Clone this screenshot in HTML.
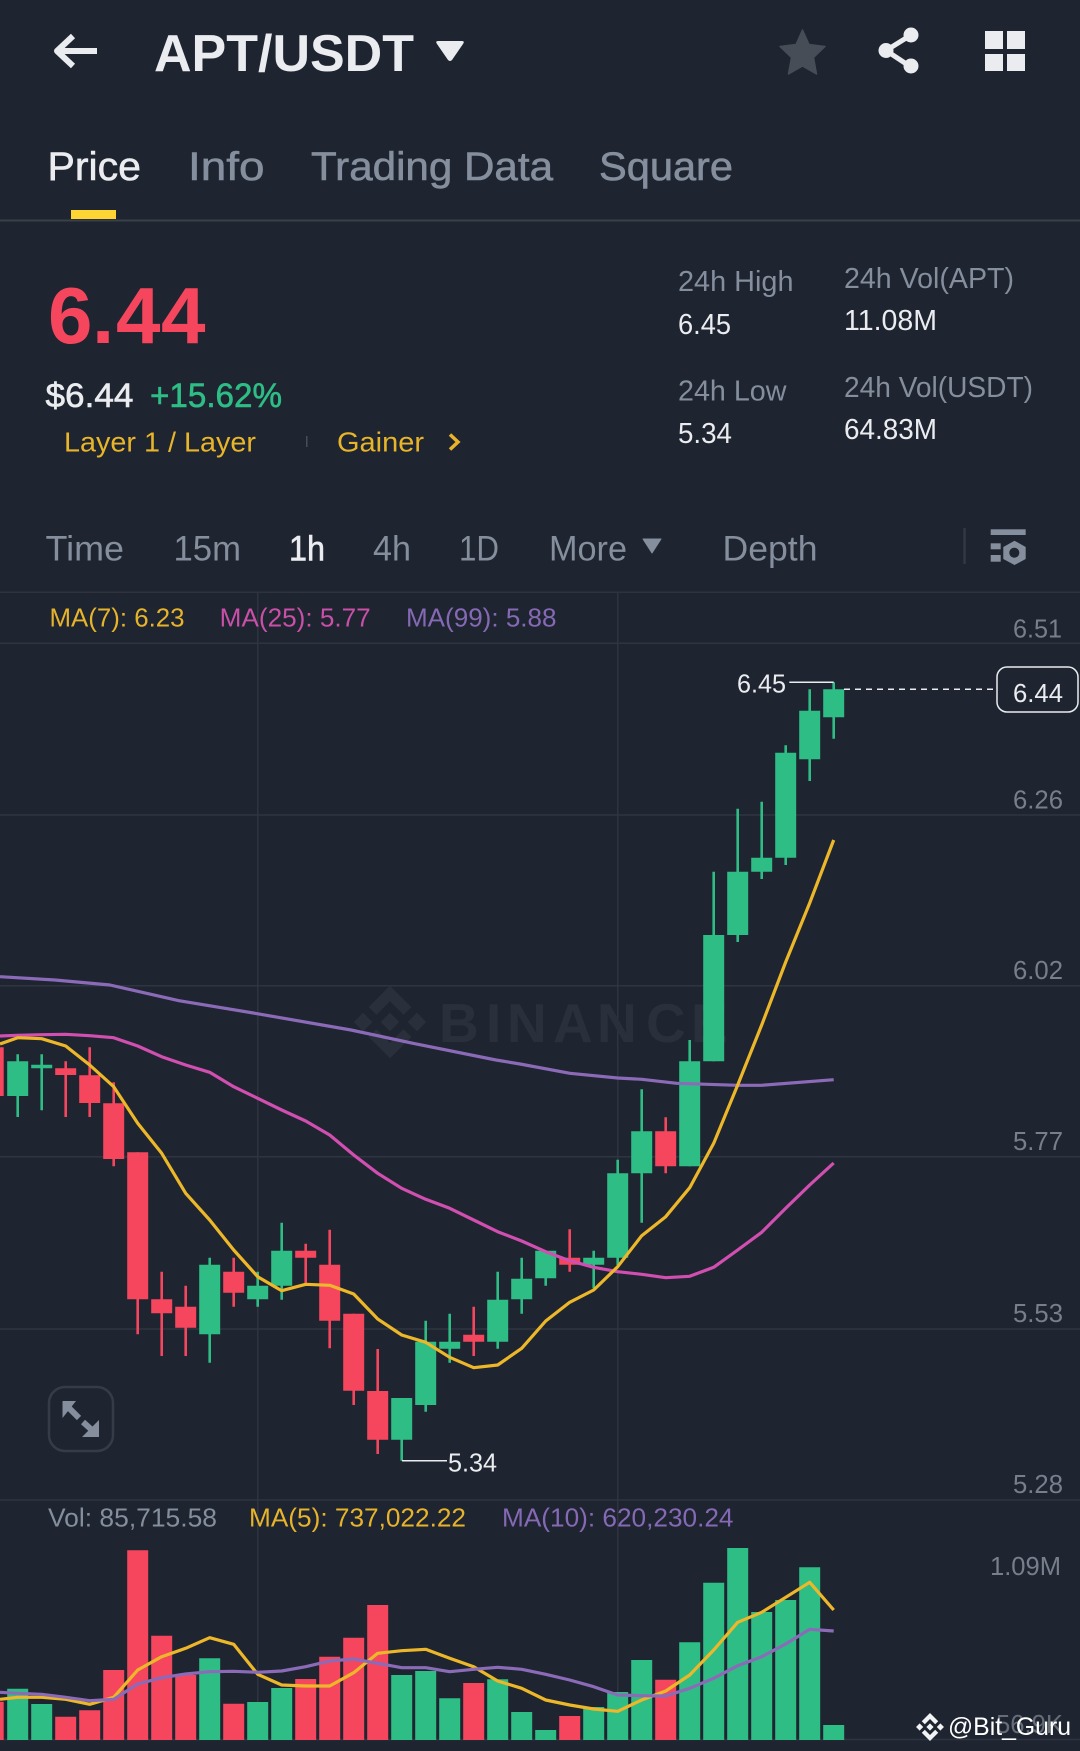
<!DOCTYPE html>
<html><head><meta charset="utf-8"><title>APT/USDT</title>
<style>
html,body{margin:0;padding:0;background:#1E2430;width:1080px;height:1751px;overflow:hidden}
svg{display:block}
text{font-family:"Liberation Sans",sans-serif}
.g{fill:#848E9C}.w{fill:#EAECEF}.a{fill:#777F8C;font-size:26px}
.m{stroke-width:.6px;stroke:currentColor}
</style></head><body>
<svg width="1080" height="1751" viewBox="0 0 1080 1751" xmlns="http://www.w3.org/2000/svg">
<rect width="1080" height="1751" fill="#1E2430"/>

<!-- header icons -->
<path d="M97 51H59M73 36L57 51L73 66" fill="none" stroke="#EAECEF" stroke-width="6" stroke-linejoin="round"/>
<text x="154" y="71" font-size="52" font-weight="700" class="w" textLength="260" lengthAdjust="spacingAndGlyphs">APT/USDT</text>
<path d="M438 41H462Q465 41 463 44L452 60Q450 62 448 60L437 44Q435 41 438 41Z" fill="#EAECEF"/>
<path d="M802.5 30L809 44.500L825 46.500L813.500 57.500L816.500 74L802.500 66L788.500 74L791.500 57.500L780 46.500L796 44.500Z" fill="#474D57" stroke="#474D57" stroke-width="1.500" stroke-linejoin="round"/>
<g fill="#EAECEF" stroke="#EAECEF"><path d="M911 35L886 50.500L911 67" fill="none" stroke-width="5"/><circle cx="911" cy="35" r="7"/><circle cx="886" cy="50.500" r="7"/><circle cx="911" cy="66" r="7"/></g>
<path d="M985 31h18v18h-18zM1007 31h18v18h-18zM985 54h18v17h-18zM1007 54h18v17h-18z" fill="#EAECEF"/>

<!-- tabs -->
<g font-size="40">
<text x="47.500" y="180" class="w m" color="#EAECEF" textLength="93.500" lengthAdjust="spacingAndGlyphs">Price</text>
<text x="188" y="180" class="g m" color="#848E9C" textLength="76.500" lengthAdjust="spacingAndGlyphs">Info</text>
<text x="311" y="180" class="g m" color="#848E9C" textLength="242" lengthAdjust="spacingAndGlyphs">Trading Data</text>
<text x="599" y="180" class="g m" color="#848E9C" textLength="134" lengthAdjust="spacingAndGlyphs">Square</text>
</g>
<rect x="71" y="210" width="45" height="9" fill="#FCD535"/>
<rect x="0" y="219.500" width="1080" height="2" fill="#3A3F48"/>

<!-- price -->
<text x="48 92 116 161" y="343" font-size="80" font-weight="700" fill="#F6465D">6.44</text>
<text x="45.500" y="407" font-size="34" class="w m" color="#EAECEF" textLength="88" lengthAdjust="spacingAndGlyphs">$6.44</text>
<text x="150" y="407" font-size="34" fill="#2EBD85" class="m" color="#2EBD85" textLength="132" lengthAdjust="spacingAndGlyphs">+15.62%</text>
<text x="64" y="451.500" font-size="28" fill="#E8B52A" textLength="192" lengthAdjust="spacingAndGlyphs">Layer 1 / Layer</text>
<rect x="306" y="436" width="1.500" height="11" fill="#474D57"/>
<text x="337" y="451.500" font-size="28" fill="#E8B52A" textLength="87" lengthAdjust="spacingAndGlyphs">Gainer</text>
<path d="M450 434.500L458 442L450 449.500" fill="none" stroke="#E8B52A" stroke-width="3.500"/>

<!-- stats -->
<g font-size="29">
<text x="678" y="291" class="g" textLength="115.500" lengthAdjust="spacingAndGlyphs">24h High</text>
<text x="678" y="334" class="w" textLength="53" lengthAdjust="spacingAndGlyphs">6.45</text>
<text x="844" y="288" class="g" textLength="170" lengthAdjust="spacingAndGlyphs">24h Vol(APT)</text>
<text x="844" y="330" class="w" textLength="93" lengthAdjust="spacingAndGlyphs">11.08M</text>
<text x="678" y="400.500" class="g" textLength="108.500" lengthAdjust="spacingAndGlyphs">24h Low</text>
<text x="678" y="443" class="w" textLength="54" lengthAdjust="spacingAndGlyphs">5.34</text>
<text x="844" y="397" class="g" textLength="189" lengthAdjust="spacingAndGlyphs">24h Vol(USDT)</text>
<text x="844" y="439" class="w" textLength="93" lengthAdjust="spacingAndGlyphs">64.83M</text>
</g>

<!-- timeframe row -->
<g font-size="35">
<text x="45.500" y="560.500" class="g" textLength="78.500" lengthAdjust="spacingAndGlyphs">Time</text>
<text x="173.500" y="560.500" class="g" textLength="67.500" lengthAdjust="spacingAndGlyphs">15m</text>
<text x="289" y="560.500" class="w m" color="#EAECEF" textLength="36" lengthAdjust="spacingAndGlyphs">1h</text>
<text x="373" y="560.500" class="g" textLength="38" lengthAdjust="spacingAndGlyphs">4h</text>
<text x="459" y="560.500" class="g" textLength="40" lengthAdjust="spacingAndGlyphs">1D</text>
<text x="549" y="560.500" class="g" textLength="78" lengthAdjust="spacingAndGlyphs">More</text>
<text x="722.500" y="560.500" class="g" textLength="95" lengthAdjust="spacingAndGlyphs">Depth</text>
</g>
<path d="M643 539H661L652 553Z" fill="#848E9C" stroke="#848E9C" stroke-linejoin="round"/>
<rect x="963.300" y="528" width="2.500" height="36" fill="#333843"/>
<g fill="#848E9C">
<rect x="990.700" y="529.300" width="35" height="5.700"/>
<rect x="990.700" y="543.300" width="10" height="6"/>
<rect x="990.700" y="555" width="10" height="6.700"/>
<path fill-rule="evenodd" d="M1014.500 540.700L1025.700 547V559L1014.500 565L1003.300 559V547ZM1014.300 547.700a5 5 0 1 0 .01 0Z"/>
</g>
<rect x="0" y="591.500" width="1080" height="1.500" fill="#2E333D"/>

<!-- grid -->
<path d="M0 643.300H1080M0 815H1080M0 985.700H1080M0 1156.700H1080M0 1329H1080M0 1500H1080M0 1739.500H1080M257.700 592V1740M617.700 592V1740" stroke="#2F3540" stroke-width="1.500" fill="none"/>

<!-- watermark -->
<g fill="#2A303B">
<g transform="translate(390 1022) scale(3.450) translate(-16 -16)"><path d="M16 13.300L18.700 16L16 18.700L13.300 16ZM8.200 13.300L10.900 16L8.200 18.700L5.500 16ZM23.800 13.300L26.500 16L23.800 18.700L21.100 16ZM12.100 13.900L16 10L19.900 13.900L22.200 11.700L16 5.500L9.800 11.700ZM12.100 18.100L16 22L19.900 18.100L22.200 20.300L16 26.500L9.800 20.300Z"/></g>
<text x="439 486 507 553 597 646 691" y="1042" font-size="55" font-weight="700">BINANCE</text>
</g>

<!-- legend -->
<g font-size="26">
<text x="49.500" y="626.700" fill="#E6B32B" textLength="135" lengthAdjust="spacingAndGlyphs">MA(7): 6.23</text>
<text x="219.700" y="626.700" fill="#C94FA8" textLength="151" lengthAdjust="spacingAndGlyphs">MA(25): 5.77</text>
<text x="406" y="626.700" fill="#8569B4" textLength="150.500" lengthAdjust="spacingAndGlyphs">MA(99): 5.88</text>
<text x="48" y="1526.700" class="g" textLength="169" lengthAdjust="spacingAndGlyphs">Vol: 85,715.58</text>
<text x="249" y="1526.700" fill="#E6B32B" textLength="217" lengthAdjust="spacingAndGlyphs">MA(5): 737,022.22</text>
<text x="502" y="1526.700" fill="#8569B4" textLength="231.500" lengthAdjust="spacingAndGlyphs">MA(10): 620,230.24</text>
</g>

<!-- axis -->
<text x="1013" y="637.700" class="a" textLength="49" lengthAdjust="spacingAndGlyphs">6.51</text>
<text x="1013" y="808.500" class="a" textLength="50" lengthAdjust="spacingAndGlyphs">6.26</text>
<text x="1013" y="979" class="a" textLength="50" lengthAdjust="spacingAndGlyphs">6.02</text>
<text x="1013" y="1150" class="a" textLength="50" lengthAdjust="spacingAndGlyphs">5.77</text>
<text x="1013" y="1322" class="a" textLength="50" lengthAdjust="spacingAndGlyphs">5.53</text>
<text x="1013" y="1493" class="a" textLength="50" lengthAdjust="spacingAndGlyphs">5.28</text>
<text x="990" y="1575" class="a" textLength="71" lengthAdjust="spacingAndGlyphs">1.09M</text>
<text x="996" y="1733" class="a" fill-opacity=".8" textLength="67" lengthAdjust="spacingAndGlyphs">56.9K</text>

<!-- wicks -->
<path fill="none" stroke="#2EBD85" stroke-width="2.600" d="M17.700 1054.300V1117M41.700 1054.300V1110.300M209.700 1257.700V1362.700M257.700 1271.700V1306.700M281.700 1222.700V1299.700M401.700 1439V1460.700M425.700 1320.700V1411.700M449.700 1313.700V1362.700M497.700 1271.700V1348.700M521.700 1257.700V1313.700M545.700 1250.700V1285.700M593.700 1250.700V1288.300M617.700 1159.700V1265M641.700 1089.300V1222.700M689.700 1040V1166.300M713.700 871.700V1061.300M737.700 808.700V942M761.700 801.700V879M785.700 745.300V865M809.700 689.300V781M833.700 682.300V738.700"/>
<path fill="none" stroke="#F6465D" stroke-width="2.600" d="M65.700 1061.300V1117M89.700 1047.300V1117M113.700 1082.300V1166.300M137.700 1152.300V1334.300M161.700 1271.700V1356M185.700 1285.700V1356M233.700 1257.700V1306.700M305.700 1243.700V1285.700M329.700 1229.700V1348.300M353.700 1313.700V1405M377.700 1349V1454M473.700 1306.700V1356M569.700 1229.300V1271.700M665.700 1117.300V1173.300"/>
<!-- bodies -->
<path fill="#2EBD85" d="M7.200 1061.300h21V1096h-21zM31.200 1064.700h21v3.600h-21zM199.200 1264.700h21v69.600h-21zM247.200 1285.700h21v13.600h-21zM271.200 1250.700h21v35h-21zM391.200 1398h21v41.700h-21zM415.200 1341.700h21v63.300h-21zM439.200 1341.700h21v7h-21zM487.200 1299.700h21v42h-21zM511.200 1278.700h21v20.600h-21zM535.200 1250.700h21v27.600h-21zM583.200 1257.700h21v7h-21zM607.200 1173.300h21v84.400h-21zM631.200 1131.300h21v42h-21zM679.200 1061.300h21v105h-21zM703.200 935h21v126.300h-21zM727.200 871.700h21V935h-21zM751.200 857.700h21v14h-21zM775.200 752.700h21v105h-21zM799.200 710.700h21v48.600h-21zM823.200 689.300h21v28h-21z"/>
<path fill="#F6465D" d="M-17.300 1047.300h21V1096h-21zM55.200 1068.300h21v6.700h-21zM79.200 1075.300h21v27.700h-21zM103.200 1103.300h21V1159h-21zM127.200 1152.300h21v147h-21zM151.200 1299.300h21v14h-21zM175.200 1306.700h21v21h-21zM223.200 1271.700h21v21h-21zM295.200 1250.700h21v7h-21zM319.200 1264.700h21v56h-21zM343.200 1313.700h21v77h-21zM367.200 1391h21v48.700h-21zM463.200 1334.700h21v7h-21zM559.200 1257.700h21v7h-21zM655.200 1131.300h21v35h-21z"/>

<!-- MA lines -->
<g fill="none" stroke-width="3.200" stroke-linejoin="round">
<polyline stroke="#8B6BB8" points="0,976.700 55,980 110,985 179,1000.700 255,1013.300 351,1030 413,1043.300 496,1060 520,1064 570,1073.300 617.700,1078 641.700,1079.300 676.700,1083.300 737.700,1085.300 761.700,1085.300 833.700,1079.700"/>
<polyline stroke="#D04FB0" points="0,1036 17.700,1035.300 41.700,1034.700 65.700,1034.300 89.700,1035.700 113.700,1037.700 137.700,1046 161.700,1056.700 185.700,1065 209.700,1072.300 233.700,1086.700 257.700,1098.300 281.700,1110 305.700,1121 329.700,1135 353.700,1155 377.700,1173.300 401.700,1188.300 425.700,1199.300 449.700,1208.300 473.700,1220 497.700,1231.700 521.700,1241 545.700,1251.700 569.700,1260.700 593.700,1267.300 617.700,1271.700 641.700,1274.300 665.700,1277.700 689.700,1276.300 713.700,1267.300 737.700,1250 761.700,1232.300 785.700,1208.300 809.700,1185 833.700,1163"/>
<polyline stroke="#EDB72A" points="0,1044 17.700,1037.700 41.700,1038.700 65.700,1046 89.700,1065 113.700,1086.700 137.700,1123.300 161.700,1153.300 185.700,1193.300 209.700,1220 233.700,1250 257.700,1276.700 281.700,1290.700 305.700,1284.300 329.700,1285.300 353.700,1294 377.700,1319 401.700,1335 425.700,1342.300 449.700,1357.300 473.700,1367.700 497.700,1365 521.700,1348.300 545.700,1321 569.700,1302.300 593.700,1290 617.700,1266.700 641.700,1235.700 665.700,1216.700 689.700,1187.700 713.700,1143.300 737.700,1085 761.700,1025 785.700,962 809.700,903 833.700,840"/>
</g>

<!-- high/low marks -->
<path d="M789.300 682.300H833.700M402 1460.700H447" stroke="#EAECEF" stroke-width="1.500" fill="none"/>
<path d="M844 689.300H995" stroke="#EAECEF" stroke-width="1.500" stroke-dasharray="6 5" fill="none"/>
<rect x="997" y="667" width="81" height="45" rx="10" fill="#1E2430" stroke="#EAECEF" stroke-width="1.500"/>
<text x="737" y="692.300" font-size="26" class="w" textLength="49" lengthAdjust="spacingAndGlyphs">6.45</text>
<text x="1013" y="702" font-size="26" class="w" textLength="50" lengthAdjust="spacingAndGlyphs">6.44</text>
<text x="448" y="1471.700" font-size="26" class="w" textLength="49" lengthAdjust="spacingAndGlyphs">5.34</text>

<!-- expand button -->
<rect x="49" y="1387" width="64" height="64" rx="16" fill="none" stroke="#363C47" stroke-width="2.500"/>
<path d="M62.500 1401H76L62.500 1418ZM99 1437H82L99 1420Z" fill="#848E9C"/>
<path d="M69 1408L79 1418M83 1422L93 1431" stroke="#848E9C" stroke-width="6" fill="none"/>

<!-- volume bars -->
<path fill="#F6465D" d="M-17.300 1701.700h21V1740h-21zM55.200 1716.700h21V1740h-21zM79.200 1710.300h21V1740h-21zM103.200 1670h21V1740h-21zM127.200 1550.300h21V1740h-21zM151.200 1635.700h21V1740h-21zM175.200 1675h21V1740h-21zM223.200 1703.700h21V1740h-21zM295.200 1679h21V1740h-21zM319.200 1656.700h21V1740h-21zM343.200 1637.700h21V1740h-21zM367.200 1605h21V1740h-21zM463.200 1683h21V1740h-21zM559.200 1716h21V1740h-21zM655.200 1679.700h21V1740h-21z"/>
<path fill="#2EBD85" d="M7.200 1688.700h21V1740h-21zM31.200 1704h21V1740h-21zM199.200 1658.300h21V1740h-21zM247.200 1702h21V1740h-21zM271.200 1688h21V1740h-21zM391.200 1675h21V1740h-21zM415.200 1671h21V1740h-21zM439.200 1698.300h21V1740h-21zM487.200 1679.300h21V1740h-21zM511.200 1712h21V1740h-21zM535.200 1730h21V1740h-21zM583.200 1707h21V1740h-21zM607.200 1692h21V1740h-21zM631.200 1660h21V1740h-21zM679.200 1642.300h21V1740h-21zM703.200 1582.700h21V1740h-21zM727.200 1548h21V1740h-21zM751.200 1612h21V1740h-21zM775.200 1600h21V1740h-21zM799.200 1567.300h21V1740h-21zM823.200 1725h21V1740h-21z"/>
<g fill="none" stroke-width="3.200" stroke-linejoin="round">
<polyline stroke="#EDB72A" points="0,1699.300 17.700,1697.300 41.700,1697.300 65.700,1699.300 89.700,1704.300 113.700,1697.300 137.700,1670 161.700,1656.700 185.700,1648.300 209.700,1637.700 233.700,1644.300 257.700,1674.300 281.700,1685 305.700,1686 329.700,1686 353.700,1672.700 377.700,1653.300 401.700,1650.700 425.700,1649.300 449.700,1658.300 473.700,1666.700 497.700,1681 521.700,1688.300 545.700,1700 569.700,1705 593.700,1709 617.700,1711.300 641.700,1700 665.700,1691 689.700,1675 713.700,1650 737.700,1622.300 761.700,1612.300 785.700,1597.300 809.700,1582.300 833.700,1610"/>
<polyline stroke="#8B6BB8" points="0,1692.300 17.700,1693.300 41.700,1694.300 65.700,1697.300 89.700,1700.700 113.700,1699.300 137.700,1684 161.700,1677.700 185.700,1674 209.700,1671.700 233.700,1671.300 257.700,1672.300 281.700,1671 305.700,1666.700 329.700,1661 353.700,1659 377.700,1663.300 401.700,1667.700 425.700,1667.700 449.700,1671.700 473.700,1669.300 497.700,1667.300 521.700,1669.300 545.700,1674.300 569.700,1680 593.700,1686.700 617.700,1695 641.700,1695.700 665.700,1696 689.700,1688.300 713.700,1678.300 737.700,1665.700 761.700,1656.700 785.700,1644 809.700,1629.300 833.700,1631"/>
</g>

<!-- watermark bottom right -->
<g fill="#F2F3F5" transform="translate(930 1727) scale(1.330) translate(-16 -16)"><path d="M16 13.300L18.700 16L16 18.700L13.300 16ZM8.200 13.300L10.900 16L8.200 18.700L5.500 16ZM23.800 13.300L26.500 16L23.800 18.700L21.100 16ZM12.100 13.900L16 10L19.900 13.900L22.200 11.700L16 5.500L9.800 11.700ZM12.100 18.100L16 22L19.900 18.100L22.200 20.300L16 26.500L9.800 20.300Z"/></g>
<text x="948" y="1735" font-size="25" fill="#FFFFFF" textLength="123" lengthAdjust="spacingAndGlyphs">@Bit_Guru</text>
</svg>
</body></html>
